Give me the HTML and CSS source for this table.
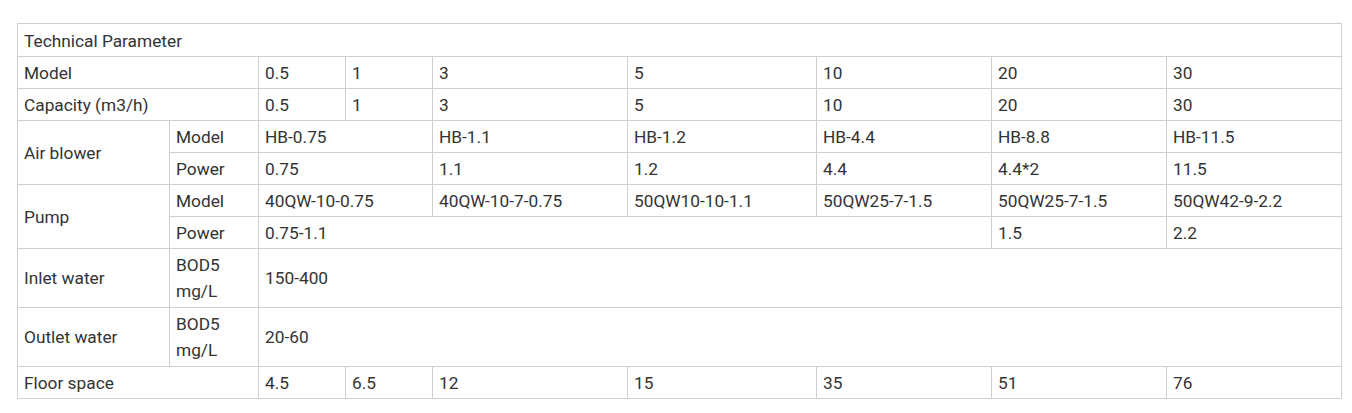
FILE: index.html
```html
<!DOCTYPE html>
<html>
<head>
<meta charset="utf-8">
<link rel="stylesheet" href="styles.css">
</head>
<body>
<div class="wrap">
<table class="spec">
<colgroup>
<col class="c1"><col class="c2"><col class="c3"><col class="c4"><col class="c5"><col class="c6"><col class="c7"><col class="c8"><col class="c9">
</colgroup>
<tbody>
<tr class="title"><td colspan="9">Technical Parameter</td></tr>
<tr><td colspan="2">Model</td><td>0.5</td><td>1</td><td>3</td><td>5</td><td>10</td><td>20</td><td>30</td></tr>
<tr><td colspan="2">Capacity (m3/h)</td><td>0.5</td><td>1</td><td>3</td><td>5</td><td>10</td><td>20</td><td>30</td></tr>
<tr><td rowspan="2">Air blower</td><td>Model</td><td colspan="2">HB-0.75</td><td>HB-1.1</td><td>HB-1.2</td><td>HB-4.4</td><td>HB-8.8</td><td>HB-11.5</td></tr>
<tr><td>Power</td><td colspan="2">0.75</td><td>1.1</td><td>1.2</td><td>4.4</td><td>4.4*2</td><td>11.5</td></tr>
<tr><td rowspan="2">Pump</td><td>Model</td><td colspan="2">40QW-10-0.75</td><td>40QW-10-7-0.75</td><td>50QW10-10-1.1</td><td>50QW25-7-1.5</td><td>50QW25-7-1.5</td><td>50QW42-9-2.2</td></tr>
<tr><td>Power</td><td colspan="5">0.75-1.1</td><td>1.5</td><td>2.2</td></tr>
<tr class="tall"><td>Inlet water</td><td>BOD5 mg/L</td><td colspan="7">150-400</td></tr>
<tr class="tall"><td>Outlet water</td><td>BOD5 mg/L</td><td colspan="7">20-60</td></tr>
<tr><td colspan="2">Floor space</td><td>4.5</td><td>6.5</td><td>12</td><td>15</td><td>35</td><td>51</td><td>76</td></tr>
</tbody>
</table>
</div>
</body>
</html>
```
FILE: styles.css
```css
html, body {
  margin: 0;
  padding: 0;
  background: #ffffff;
}
.wrap {
  padding: 23px 0 0 17px;
}
.spec {
  border-collapse: collapse;
  table-layout: fixed;
  width: 1325px;
  font-family: Roboto, "Liberation Sans", sans-serif;
  font-size: 17.3px;
  line-height: 26px;
  color: #333333;
}
.spec td {
  border: 1px solid #cfcfcf;
  padding: 3px 6px 2px 6px;
  vertical-align: middle;
  text-align: left;
  font-weight: 400;
}
.spec .title td {
  padding-top: 4px;
}
.spec .tall td {
  padding-bottom: 3px;
}
.c1 { width: 152px; }
.c2 { width: 89px; }
.c3 { width: 87px; }
.c4 { width: 87px; }
.c5 { width: 195px; }
.c6 { width: 189px; }
.c7 { width: 175px; }
.c8 { width: 175px; }
.c9 { width: 175px; }
```
